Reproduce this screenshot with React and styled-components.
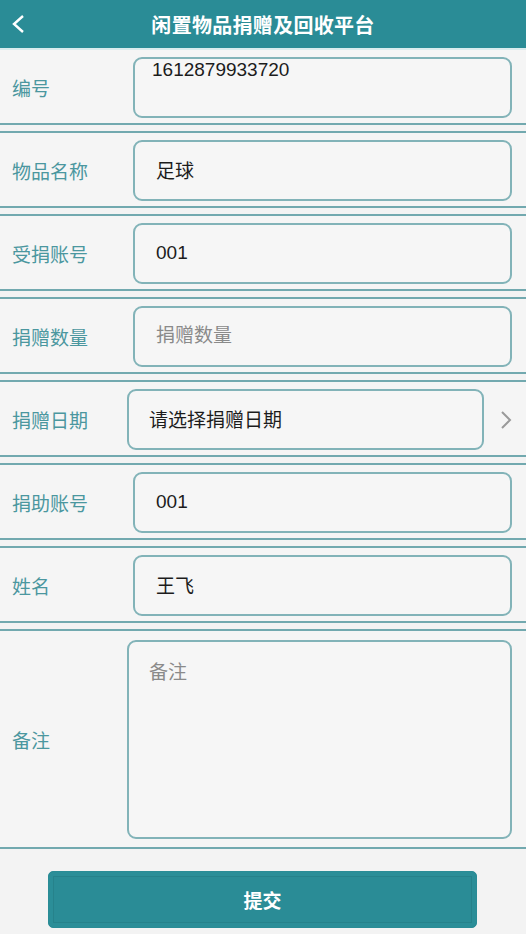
import React from 'react';
import styled, { createGlobalStyle } from 'styled-components';

const GlobalStyle = createGlobalStyle`
  html, body {
    margin: 0;
    padding: 0;
    background: #f3f3f3;
  }
  body {
    font-family: "Liberation Sans", "Noto Sans CJK SC", sans-serif;
  }
  * {
    box-sizing: border-box;
  }
`;

const Page = styled.div`
  width: 526px;
  min-height: 934px;
  background: #f3f3f3;
  display: flex;
  flex-direction: column;
`;

const TopBar = styled.div`
  height: 48px;
  background: #2a8c96;
  display: grid;
  grid-template-columns: 48px 1fr 48px;
  align-items: center;
`;

const BackButton = styled.button`
  border: none;
  background: none;
  padding: 0 0 0 10px;
  height: 48px;
  display: flex;
  align-items: center;
  cursor: pointer;
`;

const Title = styled.h1`
  margin: 0;
  text-align: center;
  color: #ffffff;
  font-size: 20px;
  font-weight: bold;
  letter-spacing: 0.3px;
  font-family: "Noto Sans CJK SC", sans-serif;
`;

const Form = styled.form`
  display: flex;
  flex-direction: column;
  gap: 6px;
`;

const Row = styled.div`
  display: flex;
  align-items: center;
  padding: ${({ $tall }) => ($tall ? '9px 14px 8px 12px' : '7px 14px 5px 12px')};
  border-top: 2px solid ${({ $first }) => ($first ? '#d9ecee' : '#72a9af')};
  border-bottom: 2px solid #72a9af;
  background: #f5f5f5;
`;

const Label = styled.label`
  width: ${({ $narrow }) => ($narrow ? '115px' : '121px')};
  flex-shrink: 0;
  color: #4b979f;
  font-size: 19px;
  font-family: "Noto Sans CJK SC", sans-serif;
`;

const Field = styled.input`
  flex: 1;
  min-width: 0;
  height: 61px;
  border: 2px solid #82b3b8;
  border-radius: 9px;
  background: #f6f6f6;
  padding: 0 0 2px ${({ $pad }) => $pad || 20}px;
  font-size: 19px;
  color: #1c1c1c;
  font-family: "Liberation Sans", "Noto Sans CJK SC", sans-serif;
  outline: none;

  &::placeholder {
    color: #8a8a8a;
  }
`;

const Area = styled.textarea`
  flex: 1;
  min-width: 0;
  height: ${({ $h }) => $h}px;
  border: 2px solid #82b3b8;
  border-radius: 9px;
  background: #f6f6f6;
  padding: ${({ $pt }) => $pt}px 10px 0 ${({ $pad }) => $pad}px;
  font-size: 19px;
  line-height: 1.1;
  color: #1c1c1c;
  font-family: "Liberation Sans", "Noto Sans CJK SC", sans-serif;
  resize: none;
  outline: none;

  &::placeholder {
    color: #8a8a8a;
  }
`;

const DateBox = styled.div`
  flex: 1;
  height: 61px;
  display: flex;
  align-items: center;
  border: 2px solid #82b3b8;
  border-radius: 9px;
  background: #f6f6f6;
  padding: 0 0 2px 20px;
  font-size: 19px;
  color: #1c1c1c;
  font-family: "Noto Sans CJK SC", sans-serif;
`;

const Arrow = styled.span`
  width: 28px;
  display: flex;
  justify-content: flex-end;
  flex-shrink: 0;
`;

const Footer = styled.div`
  padding: 22px 49px 6px 48px;
`;

const Submit = styled.button`
  width: 100%;
  height: 57px;
  border: 1px solid #2a8c96;
  border-radius: 5px;
  background: #2a8c96;
  box-shadow: inset 0 0 0 4px #2b8e98, inset 0 0 0 5px #26828b;
  color: #ffffff;
  font-size: 19px;
  font-weight: bold;
  font-family: "Noto Sans CJK SC", sans-serif;
  cursor: pointer;
`;

const fields = [
  { label: '受捐账号', value: '001' },
  { label: '捐赠数量', placeholder: '捐赠数量' },
];

export default function App() {
  return (
    <Page>
      <GlobalStyle />
      <TopBar>
        <BackButton type="button">
          <svg width="16" height="20" viewBox="0 0 16 20">
            <polyline points="13,2 4,10 13,18" fill="none" stroke="#ffffff" strokeWidth="2.4" />
          </svg>
        </BackButton>
        <Title>闲置物品捐赠及回收平台</Title>
        <span />
      </TopBar>
      <Form>
        <Row $first>
          <Label>编号</Label>
          <Area $h={61} $pt={1} $pad={17} defaultValue="1612879933720" />
        </Row>
        <Row>
          <Label>物品名称</Label>
          <Field $pad={21} defaultValue="足球" />
        </Row>
        {fields.map((f) => (
          <Row key={f.label}>
            <Label>{f.label}</Label>
            <Field $pad={21} defaultValue={f.value} placeholder={f.placeholder} />
          </Row>
        ))}
        <Row>
          <Label $narrow>捐赠日期</Label>
          <DateBox>请选择捐赠日期</DateBox>
          <Arrow>
            <svg width="12" height="20" viewBox="0 0 12 20">
              <polyline points="2,2 10,10 2,18" fill="none" stroke="#9a9a9a" strokeWidth="2" />
            </svg>
          </Arrow>
        </Row>
        <Row>
          <Label>捐助账号</Label>
          <Field $pad={21} defaultValue="001" />
        </Row>
        <Row>
          <Label>姓名</Label>
          <Field $pad={21} defaultValue="王飞" />
        </Row>
        <Row $tall>
          <Label $narrow>备注</Label>
          <Area $h={199} $pt={21} $pad={20} placeholder="备注" />
        </Row>
      </Form>
      <Footer>
        <Submit type="button">提交</Submit>
      </Footer>
    </Page>
  );
}
